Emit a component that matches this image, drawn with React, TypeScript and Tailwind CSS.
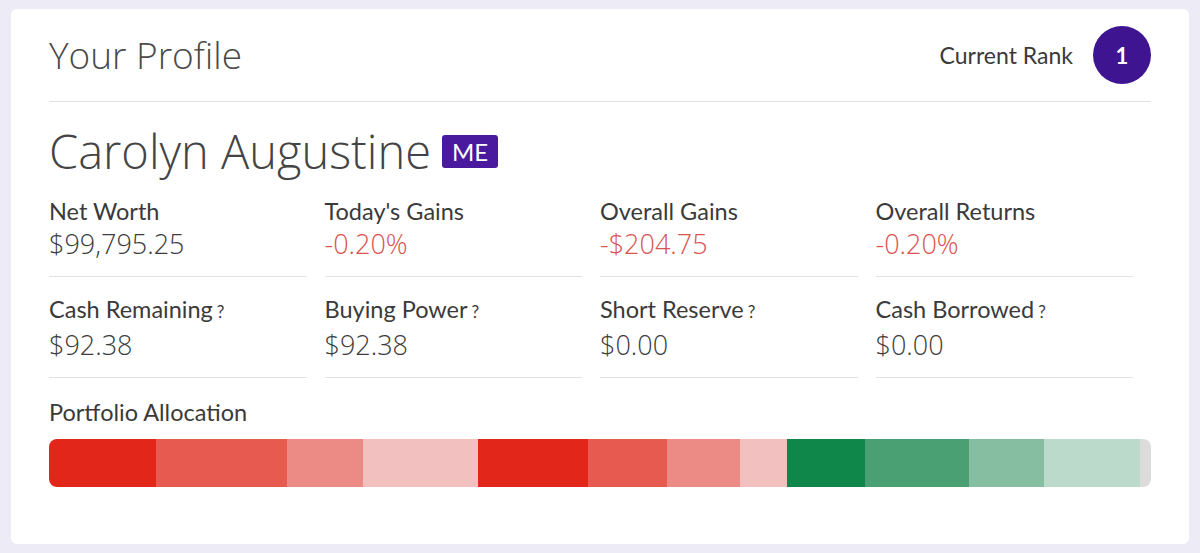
import React from 'react';

type Stat = {
  label: string;
  value: string;
  help?: boolean;
  negative?: boolean;
};

const stats: Stat[] = [
  { label: 'Net Worth', value: '$99,795.25' },
  { label: "Today's Gains", value: '-0.20%', negative: true },
  { label: 'Overall Gains', value: '-$204.75', negative: true },
  { label: 'Overall Returns', value: '-0.20%', negative: true },
  { label: 'Cash Remaining', value: '$92.38', help: true },
  { label: 'Buying Power', value: '$92.38', help: true },
  { label: 'Short Reserve', value: '$0.00', help: true },
  { label: 'Cash Borrowed', value: '$0.00', help: true },
];

// allocation slices, width in px of the 1101px bar
const slices = [
  { w: 107, color: 'bg-[#e3261a]' },
  { w: 131, color: 'bg-[#e65a50]' },
  { w: 76, color: 'bg-[#ec8a85]' },
  { w: 115, color: 'bg-[#f2c0bf]' },
  { w: 110, color: 'bg-[#e3261a]' },
  { w: 78, color: 'bg-[#e65a50]' },
  { w: 73, color: 'bg-[#ec8a85]' },
  { w: 47, color: 'bg-[#f2c0bf]' },
  { w: 78, color: 'bg-[#0f864a]' },
  { w: 104, color: 'bg-[#4aa073]' },
  { w: 75, color: 'bg-[#85bea0]' },
  { w: 96, color: 'bg-[#bcdacc]' },
  { w: 11, color: 'bg-[#dcdcdc]' },
];

const lato = { fontFamily: 'Lato, "Open Sans", sans-serif' };
const display = { fontFamily: '"Open Sans", Lato, sans-serif' };

export default function App() {
  return (
    <div className="min-h-[553px] bg-[#ecebf6] px-[11px] pt-[9px] pb-[10px]" style={lato}>
      <div className="bg-white rounded-[6px] px-[38px] pt-[17px] pb-[57px] text-[#3c3c3c]">
        {/* Header */}
        <div className="flex items-center justify-between border-b border-[#e2e2e2] pb-[17px]">
          <h1 className="text-[37px] leading-[44px] font-light text-[#4a4a4a]" style={display}>
            Your Profile
          </h1>
          <div className="flex items-center gap-[20px]">
            <span className="text-[23px] text-[#3a3a3a]">Current Rank</span>
            <div className="w-[58px] h-[58px] rounded-full bg-[#3f1490] flex items-center justify-center text-white text-[22px] font-bold">
              1
            </div>
          </div>
        </div>

        {/* Name */}
        <div className="flex items-center mt-[21px]">
          <h2 className="text-[47px] leading-[56px] font-light text-[#444]" style={display}>
            Carolyn Augustine
          </h2>
          <span className="ml-[11px] bg-[#4a1a9e] text-white text-[24px] leading-[33px] px-[10px] rounded-[3px]">
            ME
          </span>
        </div>

        {/* Stats */}
        <div className="grid grid-cols-4 mt-[19px] gap-y-[19px]">
          {stats.map((s) => (
            <div key={s.label} className="mr-[18px] border-b border-[#e2e2e2] pb-[12px]">
              <div className="text-[23.5px] leading-[26px] text-[#3a3a3a]">
                {s.label}
                {s.help && <span className="text-[17px] ml-[4px]">?</span>}
              </div>
              <div
                className={`text-[27px] leading-[40px] font-light ${
                  s.negative ? 'text-[#d9534f]' : 'text-[#3c3c3c]'
                }`}
                style={display}
              >
                {s.value}
              </div>
            </div>
          ))}
        </div>

        {/* Portfolio allocation */}
        <div className="mt-[21px] text-[23.5px] leading-[26px] text-[#3a3a3a]">Portfolio Allocation</div>
        <div className="mt-[14px] flex h-[48px] rounded-[8px] overflow-hidden">
          {slices.map((s, i) => (
            <div key={i} className={s.color} style={{ flexGrow: s.w, flexBasis: 0 }} />
          ))}
        </div>
      </div>
    </div>
  );
}
